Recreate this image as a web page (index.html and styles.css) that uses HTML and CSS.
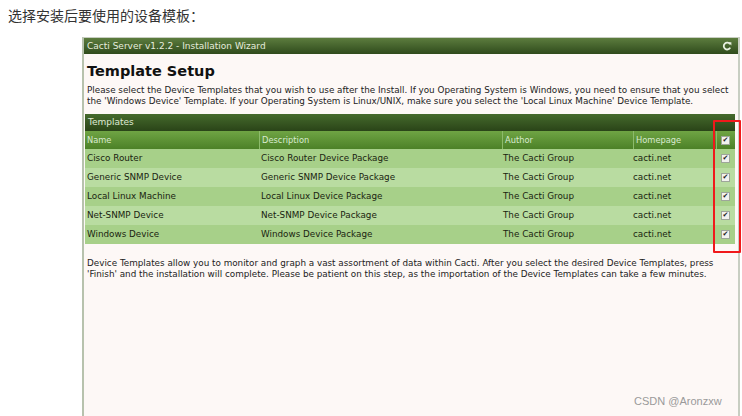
FILE: index.html
```html
<!DOCTYPE html>
<html>
<head>
<meta charset="utf-8">
<link rel="stylesheet" href="styles.css">
</head>
<body>
<p class="lead">选择安装后要使用的设备模板：</p>
<div class="shot">
  <div class="panel">
    <div class="titlebar">
      <span>Cacti Server v1.2.2 - Installation Wizard</span>
      <svg class="refresh" width="10" height="10" viewBox="0 0 10 10"><path d="M8 3.2A3.4 3.4 0 1 0 8.2 6.6" fill="none" stroke="#e8f0e0" stroke-width="1.8"/><path d="M6.2 1.2L9.4 1.2L9.4 4.4Z" fill="#e8f0e0"/></svg>
    </div>
    <div class="content">
      <h1>Template Setup</h1>
      <p class="text">Please select the Device Templates that you wish to use after the Install. If you Operating System is Windows, you need to ensure that you select the 'Windows Device' Template. If your Operating System is Linux/UNIX, make sure you select the 'Local Linux Machine' Device Template.</p>
      <div class="tbl">
        <div class="tbltitle">Templates</div>
        <div class="row head">
          <div class="c1">Name</div><div class="c2">Description</div><div class="c3">Author</div><div class="c4">Homepage</div><div class="c5"><span class="cb">&#10004;</span></div>
        </div>
        <div class="row odd"><div class="c1">Cisco Router</div><div class="c2">Cisco Router Device Package</div><div class="c3">The Cacti Group</div><div class="c4">cacti.net</div><div class="c5"><span class="cb">&#10004;</span></div></div>
        <div class="row even"><div class="c1">Generic SNMP Device</div><div class="c2">Generic SNMP Device Package</div><div class="c3">The Cacti Group</div><div class="c4">cacti.net</div><div class="c5"><span class="cb">&#10004;</span></div></div>
        <div class="row odd"><div class="c1">Local Linux Machine</div><div class="c2">Local Linux Device Package</div><div class="c3">The Cacti Group</div><div class="c4">cacti.net</div><div class="c5"><span class="cb">&#10004;</span></div></div>
        <div class="row even"><div class="c1">Net-SNMP Device</div><div class="c2">Net-SNMP Device Package</div><div class="c3">The Cacti Group</div><div class="c4">cacti.net</div><div class="c5"><span class="cb">&#10004;</span></div></div>
        <div class="row odd"><div class="c1">Windows Device</div><div class="c2">Windows Device Package</div><div class="c3">The Cacti Group</div><div class="c4">cacti.net</div><div class="c5"><span class="cb">&#10004;</span></div></div>
        <div class="redbox"></div>
      </div>
      <p class="text bottom">Device Templates allow you to monitor and graph a vast assortment of data within Cacti. After you select the desired Device Templates, press 'Finish' and the installation will complete. Please be patient on this step, as the importation of the Device Templates can take a few minutes.</p>
    </div>
  </div>
</div>
<div class="watermark">CSDN @Aronzxw</div>
</body>
</html>
```
FILE: styles.css
```css
html, body {
  margin: 0;
  padding: 0;
  background: #ffffff;
  overflow: hidden;
}
body {
  position: relative;
  width: 742px;
  height: 416px;
  font-family: "Noto Sans CJK SC", "Liberation Sans", sans-serif;
}
.lead {
  margin: 0;
  padding: 5px 0 0 8px;
  height: 25px;
  font-size: 14px;
  line-height: 20px;
  color: #333;
}
.shot {
  padding: 7px 0 0 82px;
}
.panel {
  width: 654px;
  height: 400px;
  border-left: 2px solid #b7c2ad;
  border-right: 2px solid #c8cec2;
  border-top: 1px solid #c8cec2;
  background: #fdf8f6;
  font-family: "DejaVu Sans", sans-serif;
}
.titlebar {
  height: 16px;
  background: linear-gradient(#5c7c3e, #2f4b1c);
  color: #e6ecdc;
  font-size: 9px;
  line-height: 16px;
  padding: 0 6px 0 3px;
  display: flex;
  justify-content: space-between;
  align-items: center;
}
.refresh {
  display: block;
}
.content {
  padding: 0 1px;
}
h1 {
  margin: 0;
  padding-top: 7px;
  height: 20px;
  font-size: 14.5px;
  line-height: 20px;
  font-weight: bold;
  color: #111;
  padding-left: 2px;
}
.text {
  margin: 0;
  font-size: 8.8px;
  line-height: 11px;
  color: #222;
  padding-left: 2px;
}
.text:not(.bottom) {
  padding-top: 4px;
}
.tbl {
  position: relative;
  margin-top: 7px;
  width: 650px;
}
.tbltitle {
  height: 17px;
  background: linear-gradient(#456a2c, #2a4418);
  color: #dfe8d3;
  font-size: 9px;
  line-height: 17px;
  padding-left: 3px;
}
.row {
  display: flex;
  height: 19px;
  font-size: 8.8px;
  line-height: 19px;
  color: #1a2410;
}
.row > div {
  padding-left: 2px;
  white-space: nowrap;
  overflow: hidden;
}
.c1 { width: 172px; }
.c2 { width: 240px; }
.c3 { width: 128px; }
.c4 { width: 80px; }
.c5 { flex: 1; display: flex; justify-content: flex-end; align-items: center; padding-right: 5px; }
.head {
  height: 18px;
  line-height: 18px;
  background: linear-gradient(#6fa444, #4c8127);
  color: #d8ead0;
  font-size: 8.3px;
}
.head > div + div {
  border-left: 1px solid #8dbb6b;
}
.odd { background: #a7d089; }
.even { background: #b9dca1; }
.cb {
  display: block;
  width: 7px;
  height: 7px;
  background: #f2f2ef;
  border: 1px solid #9ea69a;
  font-size: 7px;
  line-height: 7px;
  text-align: center;
  color: #222;
  font-family: "DejaVu Sans", sans-serif;
}
.redbox {
  position: absolute;
  left: 628px;
  top: 6px;
  width: 24px;
  height: 129px;
  border: 2px solid #f0191b;
  border-radius: 1px;
}
.bottom {
  padding-top: 14px;
}
.watermark {
  position: absolute;
  left: 634px;
  top: 395px;
  font-family: "Liberation Sans", sans-serif;
  font-size: 11px;
  line-height: 13px;
  color: #9a9a9a;
}
```
